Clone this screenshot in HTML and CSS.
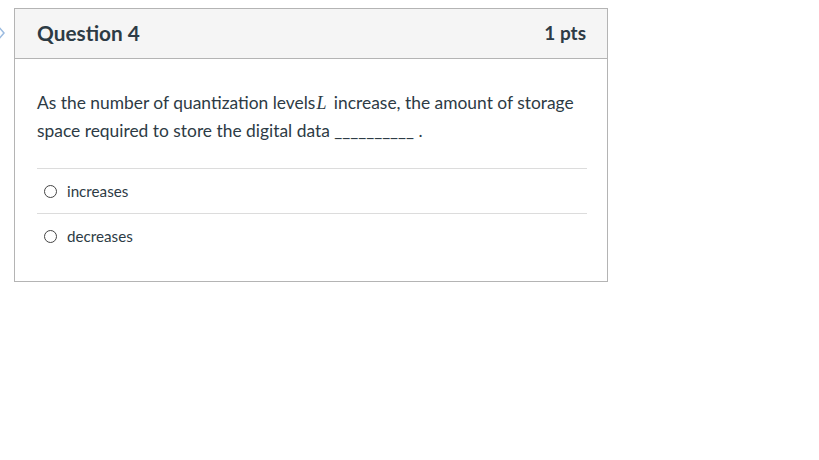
FILE: index.html
```html
<!DOCTYPE html>
<html>
<head>
<meta charset="utf-8">
<link rel="stylesheet" href="styles.css">
</head>
<body>
<div class="page">
  <div class="gutter">
    <svg class="chev" width="8" height="16" viewBox="0 0 8 16"><path d="M-2 1 L4 8 L-2 15" fill="none" stroke="#9bbbe0" stroke-width="1.5"/></svg>
  </div>
  <div class="card">
    <div class="card-header">
      <span class="title">Question 4</span>
      <span class="pts">1 pts</span>
    </div>
    <div class="card-body">
      <p class="question">As the number of quantization levels<span class="math">L</span> increase, the amount of storage space required to store the digital data __________ .</p>
      <div class="answers">
        <label class="answer"><span class="radio"></span><span class="answer-text">increases</span></label>
        <label class="answer"><span class="radio"></span><span class="answer-text">decreases</span></label>
      </div>
    </div>
  </div>
</div>
</body>
</html>
```

FILE: styles.css
```css
html, body {
  margin: 0;
  padding: 0;
  background: #ffffff;
}
body {
  font-family: Lato, "Open Sans", sans-serif;
  color: #2d3b45;
}
.page {
  display: flex;
  padding-top: 8px;
}
.gutter {
  width: 14px;
  flex: none;
  display: flex;
  align-items: flex-start;
  padding-top: 17px;
}
.chev {
  display: block;
}
.card {
  width: 594px;
  box-sizing: border-box;
  border: 1px solid #b4b4b4;
}
.card-header {
  height: 50px;
  box-sizing: border-box;
  background: #f5f5f5;
  border-bottom: 1px solid #b4b4b4;
  display: flex;
  align-items: center;
  justify-content: space-between;
  padding: 0 21px 3px 22px;
}
.title {
  font-size: 20.8px;
  font-weight: 700;
}
.pts {
  font-size: 19px;
  font-weight: 700;
}
.card-body {
  padding: 30px 20px 23px 22px;
}
.question {
  margin: 0;
  font-size: 17.4px;
  line-height: 27px;
  padding-right: 4px;
}
.math {
  font-family: "Liberation Serif", "DejaVu Serif", serif;
  font-style: italic;
  font-size: 18px;
  margin: 0 3px 0 1px;
}
.answers {
  margin-top: 24px;
  border-top: 1px solid #dcdcdc;
}
.answer {
  display: flex;
  align-items: center;
  height: 44px;
  border-bottom: 1px solid #dcdcdc;
  padding-left: 7px;
}
.answer:last-child {
  border-bottom: none;
}
.radio {
  width: 11px;
  height: 11px;
  border: 1px solid #444;
  border-radius: 50%;
  flex: none;
}
.answer-text {
  margin-left: 10px;
  font-size: 15.2px;
}
```
